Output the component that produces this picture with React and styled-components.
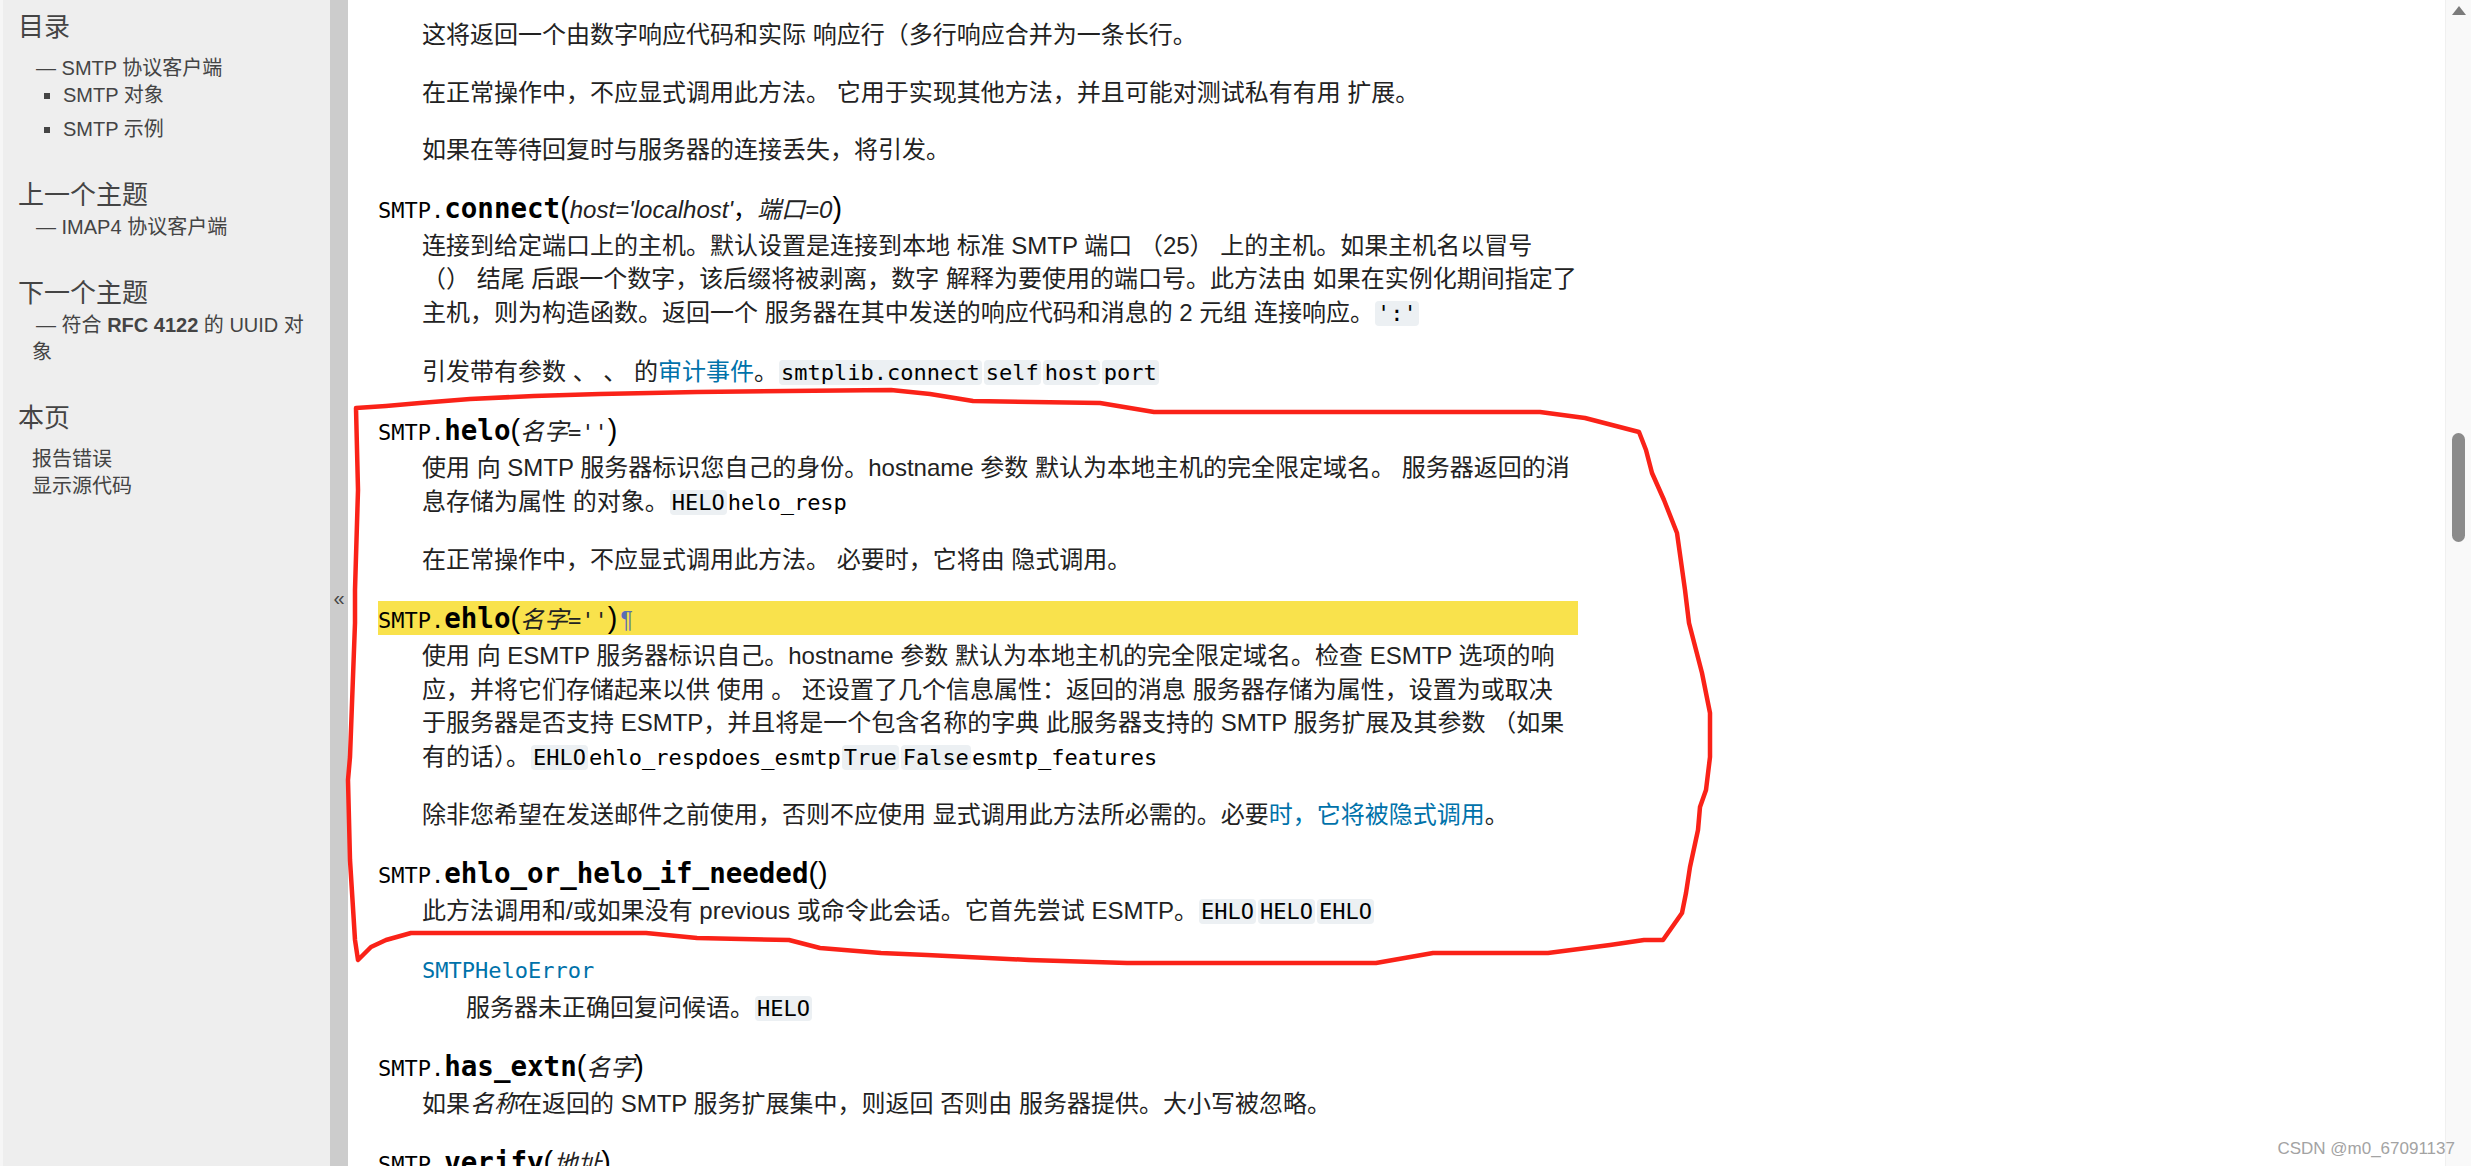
import React from "react";
import styled, { createGlobalStyle } from "styled-components";

const SANS = `"Liberation Sans", Arial, "Noto Sans CJK SC", sans-serif`;
const MONO = `"DejaVu Sans Mono", "Noto Sans CJK SC", monospace`;

const GlobalStyle = createGlobalStyle`
  html, body {
    margin: 0;
    padding: 0;
    height: 100%;
    overflow: hidden;
    background: #fff;
  }
  #root {
    height: 100%;
  }
`;

const Page = styled.div`
  position: relative;
  display: flex;
  width: 100vw;
  height: 100vh;
  overflow: hidden;
  font-family: ${SANS};
  color: #222;
`;

/* ---------- sidebar ---------- */

const Sidebar = styled.aside`
  flex: 0 0 330px;
  box-sizing: border-box;
  border-left: 3px solid #f6f6f6;
  padding: 10px 15px 0 15px;
  background: #eee;
  color: #444;
  font-size: 20px;
  line-height: 27px;
`;

const SideHeading = styled.h3`
  margin: 35px 0 0;
  font-size: 26px;
  line-height: 34px;
  font-weight: normal;
  color: #444;
  &:first-child {
    margin-top: 0;
  }
`;

const SideList = styled.ul`
  list-style: none;
  margin: 11px 0 0;
  padding: 0 0 0 14px;
`;

const SideItem = styled.li`
  text-indent: ${({ $dash }) => ($dash ? "4px" : "0")};
`;

const SubList = styled.ul`
  list-style: none;
  margin: 0;
  padding: 0 0 0 12px;
  li + li {
    margin-top: 7px;
  }
`;

const SubItem = styled.li`
  display: flex;
  align-items: center;
  text-indent: 0;
  &::before {
    content: "";
    flex: none;
    width: 6px;
    height: 6px;
    margin-right: 13px;
    background: #444;
  }
`;

const SideText = styled.p`
  margin: 2px 0 0 14px;
  text-indent: 4px;
`;

const CollapseBar = styled.div`
  flex: 0 0 18px;
  background: #ccc;
  color: #444;
  font-size: 20px;
  line-height: 20px;
  text-align: center;
  padding-top: 588px;
  box-sizing: border-box;
`;

/* ---------- main document ---------- */

const Main = styled.main`
  flex: 1;
  min-width: 0;
  background: #fff;
  overflow: hidden;
`;

const Body = styled.div`
  width: 1200px;
  padding: 18px 0 0 30px;
  font-size: 24px;
  line-height: 33.6px;
`;

const Dl = styled.dl`
  margin: 0;
`;

const Dt = styled.dt`
  height: 34px;
  margin: 0 0 4px;
  line-height: 34px;
  white-space: nowrap;
  color: #000;
  background: ${({ $target }) => ($target ? "#f9e24c" : "transparent")};
`;

const Dd = styled.dd`
  margin: 0 0 0 44px;
`;

const P = styled.p`
  margin: 0 0 24px;
`;

const ClassName = styled.span`
  font-family: ${MONO};
  font-size: 22px;
`;

const Name = styled.span`
  font-family: ${MONO};
  font-size: 27.5px;
  font-weight: bold;
`;

const Paren = styled.span`
  font-size: 28.8px;
`;

const Param = styled.em`
  font-style: italic;
  color: #222;
`;

const Default = styled.span`
  font-family: ${MONO};
  font-size: 22px;
  font-style: normal;
`;

const Pilcrow = styled.span`
  margin-left: 3px;
  font-size: 23px;
  color: #5a6db5;
`;

const Code = styled.code`
  font-family: ${MONO};
  font-size: 22px;
  color: #000;
  padding: 0 ${({ $plain }) => ($plain ? "0" : "2px")};
  margin: 0 ${({ $plain }) => ($plain ? "0" : "1px")};
  border-radius: 4px;
  background: ${({ $plain }) => ($plain ? "transparent" : "#ecf0f3")};
`;

const Link = styled.a`
  color: #0072aa;
  text-decoration: none;
  font-family: ${({ $mono }) => ($mono ? MONO : "inherit")};
  font-size: ${({ $mono }) => ($mono ? "22px" : "inherit")};
`;

/* ---------- chrome over the page ---------- */

const Scrollbar = styled.div`
  flex: 0 0 26px;
  display: flex;
  flex-direction: column;
  align-items: center;
  box-sizing: border-box;
  padding-top: 6px;
  background: #f9f9f9;
  border-left: 1px solid #f0f0f0;
`;

const ScrollArrow = styled.div`
  width: 0;
  height: 0;
  border-left: 7px solid transparent;
  border-right: 7px solid transparent;
  border-bottom: 9px solid #7b7b7b;
`;

const ScrollThumb = styled.div`
  width: 13px;
  height: 109px;
  margin-top: 418px;
  border-radius: 7px;
  background: #8b8b8b;
`;

const Annotation = styled.svg`
  position: absolute;
  left: 0;
  top: 0;
  width: 100%;
  height: 100%;
  pointer-events: none;
`;

const Watermark = styled.div`
  position: absolute;
  right: 16px;
  bottom: 7px;
  font-family: "Liberation Sans", Arial, sans-serif;
  font-size: 17px;
  line-height: 20px;
  color: #a3a3a3;
`;

const RED_PATH =
  "M356 408 L386 406 L420 403 L470 399 L534 396 L600 394 L650 393 L697 392 L891 390 L930 394 L973 401 " +
  "L1100 403 L1154 412 L1540 412 L1585 418 L1639 432 L1646 450 L1652 473 L1664 500 L1677 533 L1685 590 " +
  "L1689 623 L1702 673 L1710 713 L1710 757 L1706 790 L1700 807 L1698 830 L1690 867 L1686 893 L1682 913 " +
  "L1663 940 L1644 940 L1610 945 L1548 953 L1433 953 L1376 963 L1127 963 L1029 960 L927 955 L881 953 " +
  "L820 948 L789 940 L697 938 L646 933 L411 933 L386 940 L371 947 L358 960 L355 940 L350 860 L348 780 " +
  "L350 757 L355 623 L355 590 L358 490 Z";

const Sig = ({ name, params, target }) => (
  <Dt $target={target}>
    <ClassName>SMTP.</ClassName>
    <Name>{name}</Name>
    <Paren>(</Paren>
    {params}
    <Paren>)</Paren>
    {target && <Pilcrow>¶</Pilcrow>}
  </Dt>
);

const NameParam = () => (
  <Param>
    名字<Default>=''</Default>
  </Param>
);

const App = () => {
  return (
    <>
      <GlobalStyle />
      <Page>
        <Sidebar>
          <SideHeading>目录</SideHeading>
          <SideList>
            <SideItem $dash>
              — SMTP 协议客户端
              <SubList>
                <SubItem>SMTP 对象</SubItem>
                <SubItem>SMTP 示例</SubItem>
              </SubList>
            </SideItem>
          </SideList>

          <SideHeading>上一个主题</SideHeading>
          <SideText>— IMAP4 协议客户端</SideText>

          <SideHeading>下一个主题</SideHeading>
          <SideText>
            — 符合 <b>RFC 4122</b> 的 UUID 对象
          </SideText>

          <SideHeading>本页</SideHeading>
          <SideList>
            <SideItem>报告错误</SideItem>
            <SideItem>显示源代码</SideItem>
          </SideList>
        </Sidebar>

        <CollapseBar>«</CollapseBar>

        <Main>
          <Body>
            <Dl>
              <Dd>
                <P>这将返回一个由数字响应代码和实际 响应行（多行响应合并为一条长行。</P>
                <P>在正常操作中，不应显式调用此方法。 它用于实现其他方法，并且可能对测试私有有用 扩展。</P>
                <P>如果在等待回复时与服务器的连接丢失，将引发。</P>
              </Dd>
            </Dl>

            <Dl>
              <Sig
                name="connect"
                params={
                  <>
                    <Param>host='localhost'</Param>，<Param>端口=0</Param>
                  </>
                }
              />
              <Dd>
                <P>
                  连接到给定端口上的主机。默认设置是连接到本地 标准 SMTP 端口 （25） 上的主机。如果主机名以冒号 （）
                  结尾 后跟一个数字，该后缀将被剥离，数字 解释为要使用的端口号。此方法由
                  如果在实例化期间指定了主机，则为构造函数。返回一个 服务器在其中发送的响应代码和消息的 2 元组 连接响应。
                  <Code>':'</Code>
                </P>
                <P>
                  引发带有参数 、 、 的<Link>审计事件</Link>。<Code>smtplib.connect</Code>
                  <Code>self</Code>
                  <Code>host</Code>
                  <Code>port</Code>
                </P>
              </Dd>
            </Dl>

            <Dl>
              <Sig name="helo" params={<NameParam />} />
              <Dd>
                <P>
                  使用 向 SMTP 服务器标识您自己的身份。hostname 参数 默认为本地主机的完全限定域名。
                  服务器返回的消息存储为属性 的对象。<Code>HELO</Code>
                  <Code $plain>helo_resp</Code>
                </P>
                <P>在正常操作中，不应显式调用此方法。 必要时，它将由 隐式调用。</P>
              </Dd>
            </Dl>

            <Dl>
              <Sig name="ehlo" params={<NameParam />} target />
              <Dd>
                <P>
                  使用 向 ESMTP 服务器标识自己。hostname 参数 默认为本地主机的完全限定域名。检查 ESMTP 选项的响
                  <br />
                  应，并将它们存储起来以供 使用 。 还设置了几个信息属性：返回的消息 服务器存储为属性，设置为或取决
                  <br />
                  于服务器是否支持 ESMTP，并且将是一个包含名称的字典 此服务器支持的 SMTP 服务扩展及其参数 （如果
                  <br />
                  有的话）。<Code>EHLO</Code>
                  <Code $plain>ehlo_resp</Code>
                  <Code $plain>does_esmtp</Code>
                  <Code>True</Code>
                  <Code>False</Code>
                  <Code $plain>esmtp_features</Code>
                </P>
                <P>
                  除非您希望在发送邮件之前使用，否则不应使用 显式调用此方法所必需的。必要
                  <Link>时，它将被隐式调用</Link>。
                </P>
              </Dd>
            </Dl>

            <Dl>
              <Sig name="ehlo_or_helo_if_needed" params={null} />
              <Dd>
                <P>
                  此方法调用和/或如果没有 previous 或命令此会话。它首先尝试 ESMTP。<Code>EHLO</Code>
                  <Code>HELO</Code>
                  <Code>EHLO</Code>
                </P>
                <Dl>
                  <Dt>
                    <Link $mono>SMTPHeloError</Link>
                  </Dt>
                  <Dd>
                    <P>
                      服务器未正确回复问候语。<Code>HELO</Code>
                    </P>
                  </Dd>
                </Dl>
              </Dd>
            </Dl>

            <Dl>
              <Sig name="has_extn" params={<Param>名字</Param>} />
              <Dd>
                <P>
                  如果<em>名称</em>在返回的 SMTP 服务扩展集中，则返回 否则由 服务器提供。大小写被忽略。
                </P>
              </Dd>
            </Dl>

            <Dl>
              <Sig name="verify" params={<Param>地址</Param>} />
            </Dl>
          </Body>
        </Main>

        <Scrollbar>
          <ScrollArrow />
          <ScrollThumb />
        </Scrollbar>

        <Annotation viewBox="0 0 2471 1166" preserveAspectRatio="xMinYMin meet">
          <path
            d={RED_PATH}
            fill="none"
            stroke="#fa2218"
            strokeWidth="4.5"
            strokeLinejoin="round"
            strokeLinecap="round"
          />
        </Annotation>

        <Watermark>CSDN @m0_67091137</Watermark>
      </Page>
    </>
  );
};

export default App;
